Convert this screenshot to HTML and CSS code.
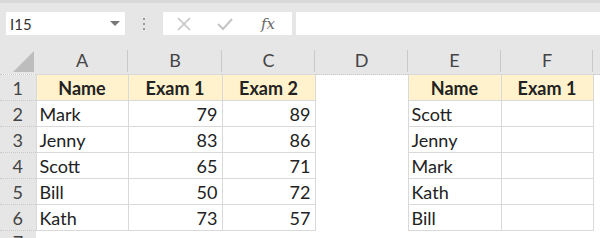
FILE: index.html
```html
<!DOCTYPE html>
<html lang="en">
<head>
  <meta charset="UTF-8" />
  <title>Sheet</title>
  <link rel="stylesheet" href="styles.css">
</head>
<body>
  <div class="toolbar">
    <div class="namebox">
      <span>I15</span>
      <span class="caret"></span>
    </div>
    <div class="grip"><i></i><i></i><i></i></div>
    <div class="fx-buttons">
      <svg width="14" height="14" viewBox="0 0 14 14"><path d="M1 1 L13 13 M13 1 L1 13" stroke="#c4c4c4" stroke-width="1.6" fill="none"/></svg>
      <svg width="16" height="14" viewBox="0 0 16 14"><path d="M1 7 L6 12 L15 2" stroke="#c4c4c4" stroke-width="2" fill="none"/></svg>
      <span class="fx">fx</span>
    </div>
    <div class="formula"></div>
  </div>

  <table class="sheet">
    <colgroup>
      <col class="rowhead">
      <col class="c1"><col class="c2"><col class="c3"><col class="c4"><col class="c5"><col class="c6"><col>
    </colgroup>
    <thead>
      <tr>
        <th class="corner"><span class="tri"></span></th>
        <th>A</th><th>B</th><th>C</th><th>D</th><th>E</th><th>F</th><th class="rest"></th>
      </tr>
    </thead>
    <tbody id="rows"></tbody>
  </table>

  <script>
    const left = [
      ["Mark", 79, 89],
      ["Jenny", 83, 86],
      ["Scott", 65, 71],
      ["Bill", 50, 72],
      ["Kath", 73, 57]
    ];
    const right = ["Scott", "Jenny", "Mark", "Kath", "Bill"];
    const rows = document.getElementById("rows");

    let html = `<tr>
      <th class="num">1</th>
      <td class="hd">Name</td><td class="hd">Exam 1</td><td class="hd">Exam 2</td>
      <td class="blank"></td>
      <td class="hd">Name</td><td class="hd">Exam 1</td><td class="blank"></td>
    </tr>`;
    left.forEach((r, i) => {
      html += `<tr>
        <th class="num">${i + 2}</th>
        <td>${r[0]}</td><td class="n">${r[1]}</td><td class="n">${r[2]}</td>
        <td class="blank"></td>
        <td>${right[i]}</td><td></td><td class="blank"></td>
      </tr>`;
    });
    html += `<tr class="cut"><th class="num">7</th><td class="blank" colspan="7"></td></tr>`;
    rows.innerHTML = html;
  </script>
</body>
</html>
```

FILE: styles.css
```css
body {
  margin: 0;
  width: 600px;
  height: 238px;
  overflow: hidden;
  background: #fff;
  font-family: Lato, "Open Sans", sans-serif;
  color: #222;
}

.toolbar {
  display: flex;
  align-items: flex-start;
  height: 45px;
  padding-top: 12px;
  box-sizing: border-box;
  background: #e6e6e6;
  border-top: 3px solid #d8d8d8;
}
.namebox {
  display: flex;
  align-items: center;
  justify-content: space-between;
  width: 119px;
  height: 23px;
  margin-left: 6px;
  margin-top: -3px;
  padding: 0 5px 0 4px;
  box-sizing: border-box;
  background: #fff;
  font-size: 15px;
  color: #333;
}
.caret {
  width: 0;
  height: 0;
  border-left: 5px solid transparent;
  border-right: 5px solid transparent;
  border-top: 5px solid #777;
}
.grip {
  display: flex;
  flex-direction: column;
  gap: 3px;
  width: 38px;
  align-items: center;
  margin-top: 3px;
}
.grip i {
  width: 2px;
  height: 2px;
  background: #999;
}
.fx-buttons {
  display: flex;
  align-items: center;
  width: 129px;
  height: 23px;
  margin-top: -3px;
  background: #fff;
  padding-left: 14px;
  gap: 26px;
  box-sizing: border-box;
}
.fx {
  font-family: "DejaVu Serif", "Liberation Serif", serif;
  font-style: italic;
  font-size: 15px;
  color: #666;
  margin-left: 2px;
}
.formula {
  flex: 1;
  height: 23px;
  margin-top: -3px;
  margin-left: 4px;
  background: #fff;
}

.sheet {
  border-collapse: collapse;
  table-layout: fixed;
  width: 600px;
  font-size: 18px;
}
.rowhead { width: 36px; }
.c1 { width: 92px; }
.c2 { width: 94px; }
.c3 { width: 93px; }
.c4 { width: 93px; }
.c5 { width: 93px; }
.c6 { width: 92px; }

thead th {
  height: 26px;
  padding: 0 0 3px;
  background: #e6e6e6;
  font-weight: normal;
  color: #444;
  vertical-align: bottom;
  border-bottom: 1px dotted #c8c8c8;
  background-image: linear-gradient(#c9c9c9, #c9c9c9);
  background-size: 1px 22px;
  background-position: right 5px;
  background-repeat: no-repeat;
}
thead th.corner {
  position: relative;
  background-image: none;
}
.tri {
  position: absolute;
  right: 2px;
  bottom: 2px;
  width: 0;
  height: 0;
  border-left: 21px solid transparent;
  border-bottom: 21px solid #bdbdbd;
}
thead th.rest { background-image: none; }

tbody tr { height: 26px; }
th.num {
  padding: 0;
  background: #e6e6e6;
  font-weight: normal;
  color: #444;
  text-align: center;
  border-bottom: 1px dotted #c8c8c8;
}
td {
  padding: 0 3px;
  border: 1px solid #d9d9d9;
  white-space: nowrap;
}
td.hd {
  background: #fff2cc;
  font-weight: bold;
  text-align: center;
}
td.n {
  text-align: right;
  padding-right: 4px;
}
td.blank {
  border: none;
}
tr.cut th.num {
  vertical-align: top;
  border-bottom: none;
}
```
